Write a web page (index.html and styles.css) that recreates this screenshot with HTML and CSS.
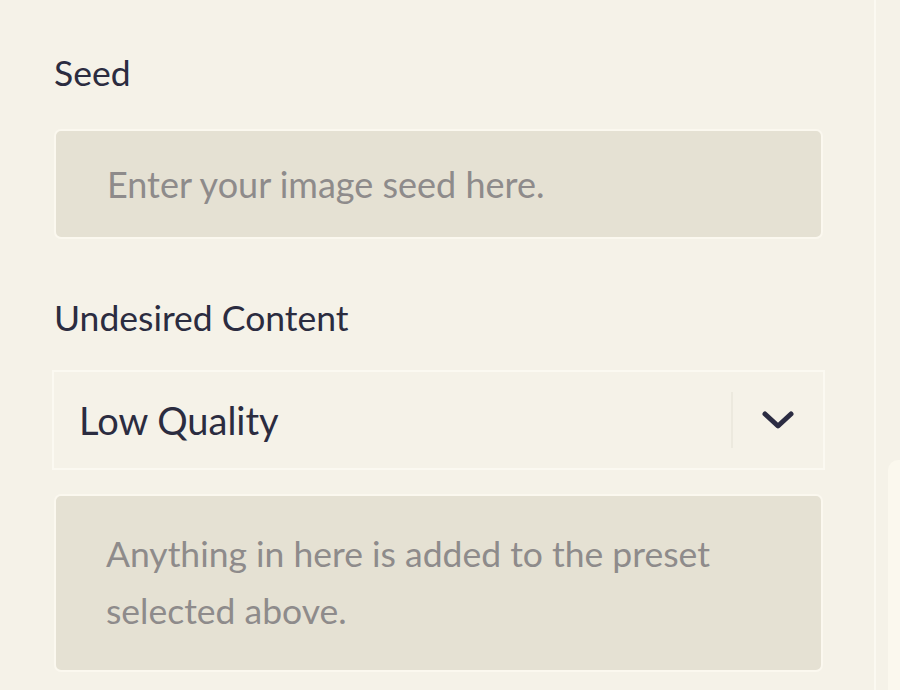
FILE: index.html
```html
<!DOCTYPE html>
<html lang="en">
  <head>
    <meta charset="UTF-8" />
    <meta name="viewport" content="width=device-width, initial-scale=1.0" />
    <link rel="stylesheet" href="styles.css">
    <title>Image settings</title>
  </head>
  <body>
    <div class="layout">
      <main class="form">
        <label class="field-label" for="seed">Seed</label>
        <input
          class="text-input"
          type="text"
          id="seed"
          placeholder="Enter your image seed here."
        />

        <label class="field-label second">Undesired Content</label>
        <div class="select">
          <div class="select-value">Low Quality</div>
          <span class="select-divider"></span>
          <div class="select-indicator">
            <svg width="32" height="20" viewBox="0 0 32 20">
              <path d="M3 4 L16 16 L29 4" fill="none" stroke="#2b2c42" stroke-width="5" stroke-linecap="round" stroke-linejoin="round" />
            </svg>
          </div>
        </div>

        <textarea
          class="text-area"
          id="undesired"
          placeholder="Anything in here is added to the preset selected above."
        ></textarea>
      </main>
      <aside class="side">
        <div class="side-card"></div>
      </aside>
    </div>
  </body>
</html>
```

FILE: styles.css
```css
body {
  margin: 0;
  background: #f5f2e8;
  font-family: Lato, "Open Sans", sans-serif;
  color: #2b2c40;
  overflow: hidden;
}

.layout {
  display: grid;
  grid-template-columns: 876px 1fr;
  height: 690px;
}

.form {
  display: flex;
  flex-direction: column;
  padding: 51px 53px 0 54px;
  border-right: 2px solid #fbf9f1;
}

.field-label {
  font-size: 35.5px;
  line-height: 44px;
}

.field-label.second {
  margin-top: 57px;
}

.text-input {
  box-sizing: border-box;
  width: 769px;
  height: 110px;
  margin-top: 34px;
  padding: 0 20px 0 51px;
  border: 2px solid #fbf8ef;
  border-radius: 7px;
  background: #e5e1d3;
  font-family: inherit;
  font-size: 36px;
  color: #2b2c40;
  outline: none;
}

.text-input::placeholder,
.text-area::placeholder {
  color: #8e8b8b;
  opacity: 1;
}

.select {
  box-sizing: border-box;
  display: flex;
  align-items: center;
  width: 773px;
  height: 100px;
  margin: 30px -2px 0 -2px;
  border: 2px solid #fbf9f1;
  background: #f5f2e8;
}

.select-value {
  flex: 1;
  padding-left: 25px;
  font-size: 38px;
}

.select-divider {
  width: 2px;
  height: 56px;
  background: #ece9de;
}

.select-indicator {
  display: flex;
  align-items: center;
  justify-content: center;
  width: 90px;
  height: 100%;
}

.text-area {
  box-sizing: border-box;
  width: 769px;
  height: 178px;
  margin-top: 24px;
  padding: 29px 60px 0 50px;
  border: 2px solid #fbf8ef;
  border-radius: 7px;
  background: #e5e1d3;
  font-family: inherit;
  font-size: 35.5px;
  line-height: 57px;
  color: #2b2c40;
  resize: none;
  outline: none;
}

.side {
  padding: 460px 0 0 12px;
}

.side-card {
  height: 100%;
  border-radius: 10px 0 0 0;
  background: #fbf8ee;
}
```
